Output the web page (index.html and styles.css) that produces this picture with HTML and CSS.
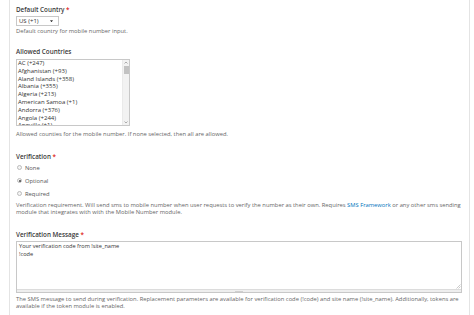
FILE: index.html
```html
<!DOCTYPE html>
<html>
<head>
<meta charset="utf-8">
<link rel="stylesheet" href="styles.css">
</head>
<body>
<div class="form">
  <div class="item">
    <div class="lbl">Default Country <span class="req">*</span></div>
    <div class="select"><span>US (+1)</span><svg class="arrow" width="3" height="2.5" viewBox="0 0 4 3"><path d="M0 0H4L2 3Z" fill="#333"/></svg></div>
    <div class="desc d1">Default country for mobile number input.</div>
  </div>

  <div class="item i2">
    <div class="lbl">Allowed Countries</div>
    <div class="listbox">
      <div class="options">
        <div class="opt">AC (+247)</div>
        <div class="opt">Afghanistan (+93)</div>
        <div class="opt">Aland Islands (+358)</div>
        <div class="opt">Albania (+355)</div>
        <div class="opt">Algeria (+213)</div>
        <div class="opt">American Samoa (+1)</div>
        <div class="opt">Andorra (+376)</div>
        <div class="opt">Angola (+244)</div>
        <div class="opt">Anguilla (+1)</div>
      </div>
      <div class="sbar">
        <svg class="sarrow" width="6" height="4" viewBox="0 0 6 4"><path d="M1.5 3L3 1.5L4.5 3" fill="none" stroke="#999" stroke-width="0.8"/></svg>
        <div class="strack"><div class="sthumb"></div></div>
        <svg class="sarrow" width="6" height="4" viewBox="0 0 6 4"><path d="M1.5 1L3 2.5L4.5 1" fill="none" stroke="#999" stroke-width="0.8"/></svg>
      </div>
    </div>
    <div class="desc d2">Allowed counties for the mobile number. If none selected, then all are allowed.</div>
  </div>

  <div class="item i3">
    <div class="lbl">Verification <span class="req">*</span></div>
    <div class="radios">
      <div class="radio"><span class="circle"></span><span>None</span></div>
      <div class="radio"><span class="circle on"></span><span>Optional</span></div>
      <div class="radio"><span class="circle"></span><span>Required</span></div>
    </div>
    <div class="desc d3">Verification requirement. Will send sms to mobile number when user requests to verify the number as their own. Requires <a class="link">SMS Framework</a> or any other sms sending module that integrates with with the Mobile Number module.</div>
  </div>

  <div class="item i4">
    <div class="lbl">Verification Message <span class="req">*</span></div>
    <div class="textarea">
      <div class="tbody">
        <div>Your verification code from !site_name</div>
        <div>!code</div>
        <svg class="corner" width="6" height="6" viewBox="0 0 6 6"><path d="M5.5 1.5L1.5 5.5M5.5 3.5L3.5 5.5" stroke="#aaa" stroke-width="0.6"/></svg>
      </div>
      <div class="grip"><span class="gmark"></span></div>
    </div>
    <div class="desc d4">The SMS message to send during verification. Replacement parameters are available for verification code (!code) and site name (!site_name). Additionally, tokens are available if the token module is enabled.</div>
  </div>
</div>
</body>
</html>
```

FILE: styles.css
```css
* { box-sizing: border-box; margin: 0; padding: 0; }
body { margin: 0; background: #fff; font-family: "Open Sans", "Liberation Sans", sans-serif; color: #333; overflow: hidden; }
.form {
  margin-left: 9px;
  width: 461px;
  height: 315px;
  border-left: 1px solid #e4e4e4;
  border-right: 1px solid #e4e4e4;
  padding: 5px 7px 0 6px;
}
.lbl { font-weight: 600; font-size: 6.3px; line-height: 9px; color: #3a3a3a; white-space: nowrap; }
.req { color: #e0291f; }
.desc { font-size: 5.8px; line-height: 7.8px; color: #666; }
.d1 { margin-top: 1px; line-height: 8px; }
.select {
  margin-top: 2px;
  width: 43px;
  height: 10px;
  border: 1px solid #c8c8c8;
  display: flex;
  align-items: center;
  justify-content: space-between;
  padding: 0 5px 0 2px;
  font-size: 6px;
  color: #333;
}
.i2 { margin-top: 12px; }
.listbox {
  margin-top: 3px;
  width: 114px;
  height: 67px;
  border: 1px solid #c8c8c8;
  display: flex;
  overflow: hidden;
}
.options { flex: 1; padding: 0 0 0 1px; font-size: 6px; line-height: 7.8px; color: #333; }
.opt { white-space: nowrap; }
.sbar { width: 7px; display: flex; flex-direction: column; background: #f2f2f2; border-left: 1px solid #eaeaea; }
.sarrow { display: block; height: 5px; width: 6px; }
.strack { flex: 1; padding-top: 1px; }
.sthumb { width: 5px; height: 8px; margin-left: 0.5px; background: #c2c2c2; }
.d2 { margin-top: 4px; line-height: 8px; }
.i3 { margin-top: 14px; }
.radios { display: flex; flex-direction: column; align-items: flex-start; }
.radio { display: flex; align-items: center; height: 13.2px; font-size: 5.8px; color: #555; }
.circle {
  width: 5px; height: 5px; border-radius: 50%;
  border: 1px solid #bbb; background: #f4f4f4;
  margin: 0 3px 0 1px;
  display: flex; align-items: center; justify-content: center;
}
.circle.on::after { content: ""; width: 2px; height: 2px; border-radius: 50%; background: #444; }
.link { color: #0074bd; text-decoration: none; }
.d3 { margin-top: 1px; }
.i4 { margin-top: 13px; }
.textarea { margin-top: 2px; width: 446px; border: 1px solid #c8c8c8; }
.tbody { height: 47px; padding: 1px 2px; font-size: 5.6px; line-height: 7.5px; color: #333; display: flex; flex-direction: column; position: relative; }
.corner { position: absolute; right: 0; bottom: 0; }
.grip { height: 3px; background: #eeeeee; border-top: 1px solid #dcdcdc; display: flex; justify-content: center; align-items: center; }
.gmark { width: 8px; height: 1px; background: #cfcfcf; }
.d4 { margin-top: 3px; line-height: 7px; }
```
